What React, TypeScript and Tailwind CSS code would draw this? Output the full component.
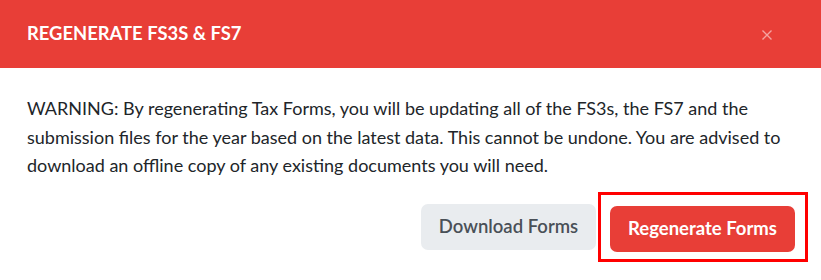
export default function App() {
  return (
    <div className="w-[821px] h-[280px] bg-white flex flex-col" style={{ fontFamily: "Lato, 'Noto Sans', sans-serif" }}>
      <div className="h-[68px] bg-[#e83e37] flex items-center justify-between pl-[27px] pr-[49px] shrink-0">
        <h1 className="text-white text-[18.4px] font-bold">REGENERATE FS3S &amp; FS7</h1>
        <svg width="10" height="10" viewBox="0 0 10 10" className="mt-[1px]">
          <path d="M0.5 0.5 L9.5 9.5 M9.5 0.5 L0.5 9.5" stroke="#f5a3a0" strokeWidth="1.4" />
        </svg>
      </div>
      <div className="px-[27px] pt-[26px]">
        <p className="text-[#212529] text-[18px] leading-[28.5px]">
          WARNING: By regenerating Tax Forms, you will be updating all of the FS3s, the FS7 and the submission files for the year based on the latest data. This cannot be undone. You are advised to download an offline copy of any existing documents you will need.
        </p>
      </div>
      <div className="flex justify-end items-center pr-[13px] mt-[12px] gap-[1px]">
        <button className="w-[175px] h-[46px] rounded-[7px] bg-[#e9ecef] text-[#495057] text-[18.5px] font-semibold">Download Forms</button>
        <div className="border-[3px] border-[#ff0000] ml-[1px] pl-[9px] pr-[10px] pt-[11px] pb-[7px]">
          <button className="w-[185px] h-[46px] rounded-[7px] bg-[#e83e37] text-white text-[18.5px] font-bold">Regenerate Forms</button>
        </div>
      </div>
    </div>
  );
}
